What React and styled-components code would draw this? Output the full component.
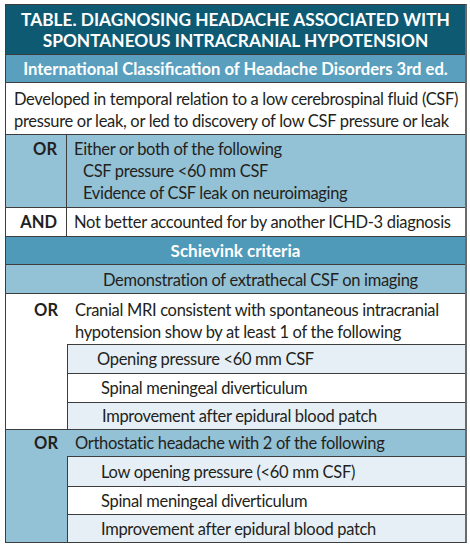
import React from "react";
import styled, { createGlobalStyle } from "styled-components";

const Global = createGlobalStyle`
  html, body { margin: 0; padding: 0; background: #ffffff; }
  body { font-family: "Lato", "Open Sans", sans-serif; color: #231f20; }
`;

const C = {
  dark: "#0e5a73",
  sub: "#5aa0be",
  head: "#4f99b9",
  blue: "#93c1d5",
  light: "#e6eff6",
  white: "#ffffff",
  line: "#3d3d3d",
  text: "#231f20",
};

const Page = styled.div`
  padding: 4px 0 0 5px;
`;

const Table = styled.div`
  width: 462px;
  box-sizing: border-box;
  border: 1px solid ${C.line};
  border-right: 2px solid #6a6a6a;
  font-size: 16.5px;
  letter-spacing: -0.32px;
  line-height: 22px;
`;

const Title = styled.div`
  height: 49px;
  background: ${C.dark};
  color: #ffffff;
  font-weight: 700;
  font-size: 17.3px;
  letter-spacing: 0;
  line-height: 21px;
  text-transform: uppercase;
  display: flex;
  flex-direction: column;
  align-items: center;
  justify-content: center;
`;

const SectionHead = styled.div`
  height: ${(p) => p.h}px;
  border-top: 1px solid ${C.line};
  background: ${(p) => p.bg};
  color: #ffffff;
  font-weight: 700;
  font-size: ${(p) => p.fs || 16.6}px;
  letter-spacing: 0;
  display: flex;
  align-items: center;
  justify-content: center;
`;

const FullRow = styled.div`
  min-height: ${(p) => p.h}px;
  box-sizing: border-box;
  border-top: 1px solid ${C.line};
  background: ${(p) => p.bg};
  padding: ${(p) => p.pad || "4px 0 0 8px"};
  display: flex;
  flex-direction: column;
  justify-content: center;
`;

const Group = styled.div`
  display: grid;
  grid-template-columns: 61px 1fr;
  border-top: 1px solid ${C.line};
  background: ${(p) => p.bg};
`;

const Label = styled.div`
  grid-row: span ${(p) => p.span || 1};
  font-weight: 700;
  letter-spacing: 0;
  text-align: right;
  padding: ${(p) => p.pt || 3}px 9px 0 0;
  border-right: ${(p) => (p.divider ? `1px solid ${C.line}` : "none")};
`;

const Cell = styled.div`
  height: ${(p) => p.h}px;
  box-sizing: border-box;
  padding: ${(p) => p.pt || 3}px 0 0 ${(p) => (p.divider ? 7 : 8)}px;
  background: ${(p) => p.bg || "transparent"};
`;

const Indent = styled.div`
  padding-left: 9px;
`;

const SubRow = styled.div`
  grid-column: 2;
  height: ${(p) => p.h}px;
  box-sizing: border-box;
  border-top: 1px solid ${C.line};
  border-left: 1px solid ${C.line};
  background: ${(p) => (p.alt ? C.light : C.white)};
  padding-left: ${(p) => p.pl || 33}px;
  display: flex;
  align-items: center;
`;

export default function App() {
  return (
    <Page>
      <Global />
      <Table>
        <Title>
          <div>Table. Diagnosing headache associated with</div>
          <div>spontaneous intracranial hypotension</div>
        </Title>

        <SectionHead h={27} bg={C.sub}>
          International Classification of Headache Disorders 3rd ed.
        </SectionHead>

        <FullRow h={52} bg={C.white} pad="3px 0 0 8px">
          <div>Developed in temporal relation to a low cerebrospinal fluid (CSF)</div>
          <div>pressure or leak, or led to discovery of low CSF pressure or leak</div>
        </FullRow>

        <Group bg={C.blue}>
          <Label divider pt={3}>OR</Label>
          <Cell h={72} divider pt={3}>
            <div>Either or both of the following</div>
            <Indent>CSF pressure &lt;60 mm CSF</Indent>
            <Indent>Evidence of CSF leak on neuroimaging</Indent>
          </Cell>
        </Group>

        <Group bg={C.white}>
          <Label divider pt={3}>AND</Label>
          <Cell h={28} divider pt={3}>
            Not better accounted for by another ICHD-3 diagnosis
          </Cell>
        </Group>

        <SectionHead h={27} bg={C.head} fs={17}>
          Schievink criteria
        </SectionHead>

        <FullRow h={29} bg={C.blue} pad="2px 0 0 97px">
          Demonstration of extrathecal CSF on imaging
        </FullRow>

        <Group bg={C.white}>
          <Label span={4} pt={5}>OR</Label>
          <Cell h={50} pt={5}>
            <div>Cranial MRI consistent with spontaneous intracranial</div>
            <div>hypotension show by at least 1 of the following</div>
          </Cell>
          <SubRow h={29} alt pl={29}>Opening pressure &lt;60 mm CSF</SubRow>
          <SubRow h={29} pl={33}>Spinal meningeal diverticulum</SubRow>
          <SubRow h={27} alt pl={34}>Improvement after epidural blood patch</SubRow>
        </Group>

        <Group bg={C.blue}>
          <Label span={4} pt={2}>OR</Label>
          <Cell h={26} pt={2}>Orthostatic headache with 2 of the following</Cell>
          <SubRow h={30} alt pl={33}>Low opening pressure (&lt;60 mm CSF)</SubRow>
          <SubRow h={28} pl={33}>Spinal meningeal diverticulum</SubRow>
          <SubRow h={28} alt pl={33}>Improvement after epidural blood patch</SubRow>
        </Group>
      </Table>
    </Page>
  );
}
